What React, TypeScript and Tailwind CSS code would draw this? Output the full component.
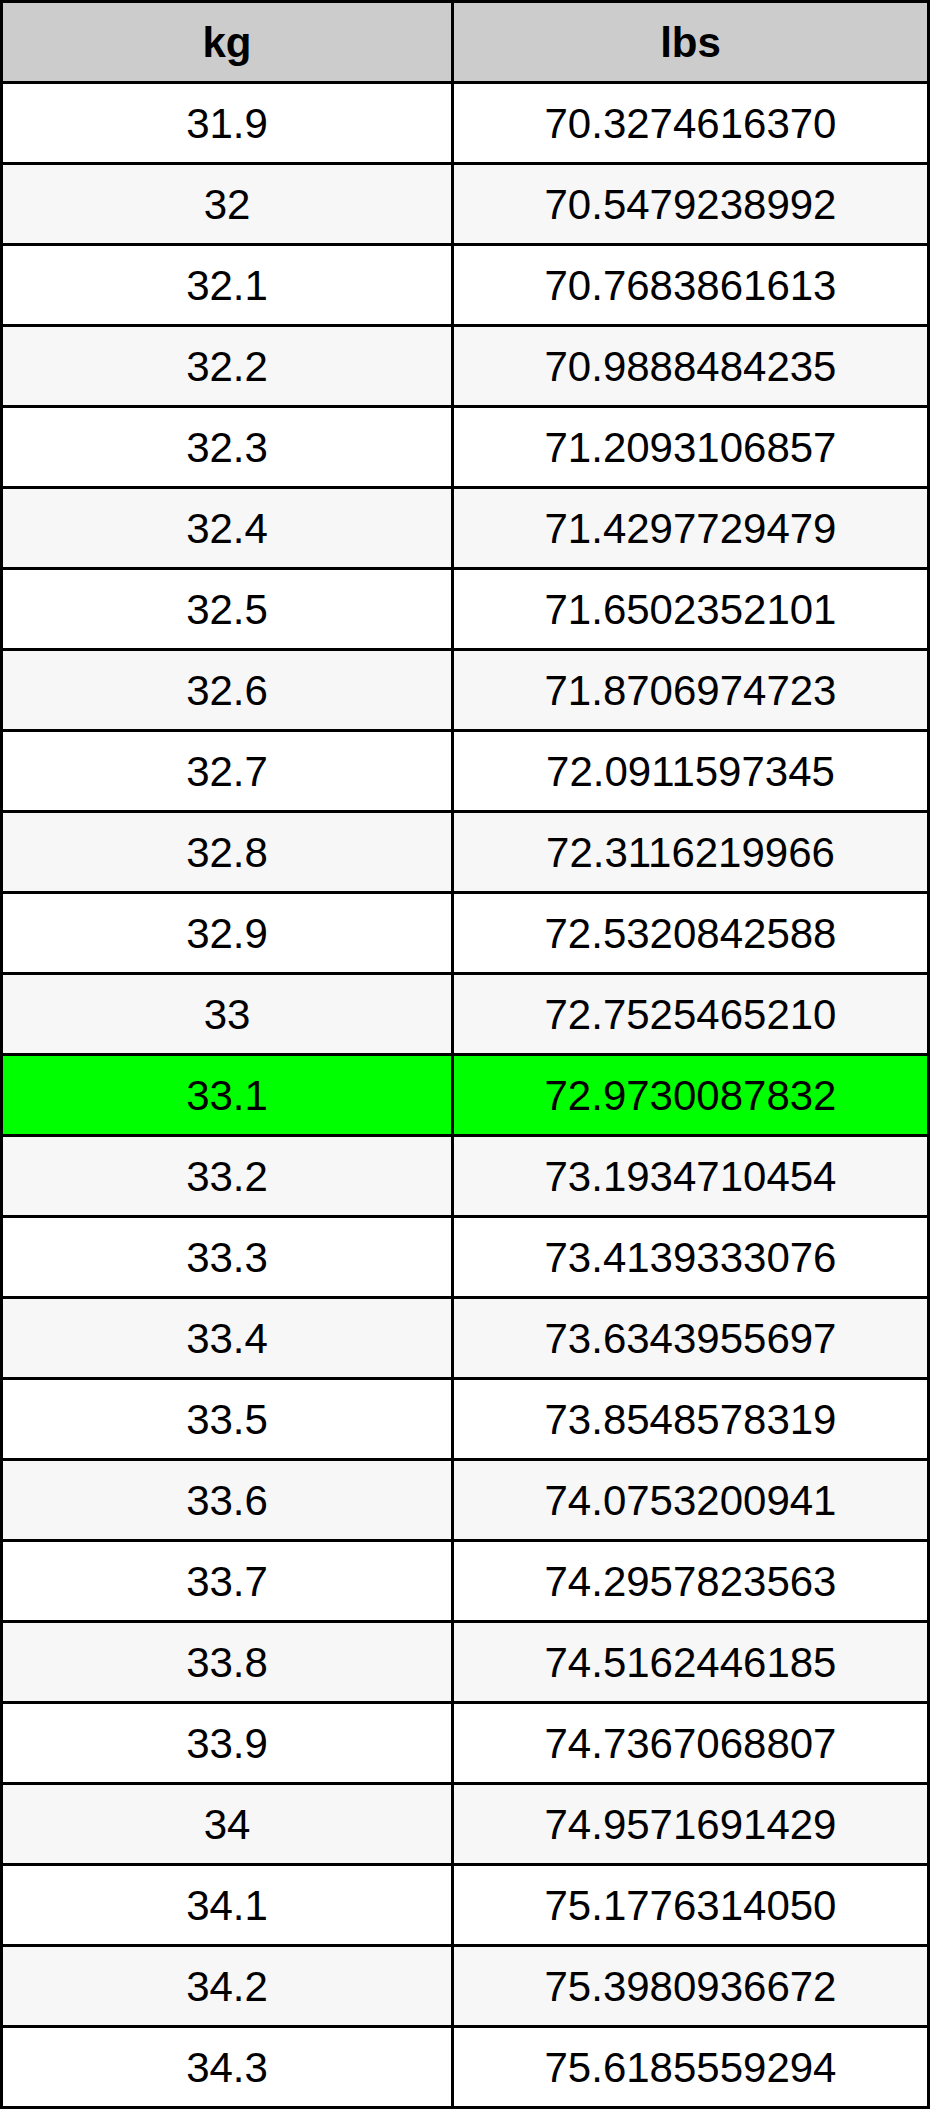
const rows: [string, string][] = [
  ['31.9', '70.3274616370'],
  ['32', '70.5479238992'],
  ['32.1', '70.7683861613'],
  ['32.2', '70.9888484235'],
  ['32.3', '71.2093106857'],
  ['32.4', '71.4297729479'],
  ['32.5', '71.6502352101'],
  ['32.6', '71.8706974723'],
  ['32.7', '72.0911597345'],
  ['32.8', '72.3116219966'],
  ['32.9', '72.5320842588'],
  ['33', '72.7525465210'],
  ['33.1', '72.9730087832'],
  ['33.2', '73.1934710454'],
  ['33.3', '73.4139333076'],
  ['33.4', '73.6343955697'],
  ['33.5', '73.8548578319'],
  ['33.6', '74.0753200941'],
  ['33.7', '74.2957823563'],
  ['33.8', '74.5162446185'],
  ['33.9', '74.7367068807'],
  ['34', '74.9571691429'],
  ['34.1', '75.1776314050'],
  ['34.2', '75.3980936672'],
  ['34.3', '75.6185559294'],
]

export default function App() {
  return (
    <div className="w-[930px] bg-white" style={{ fontFamily: "'Liberation Sans', Arial, sans-serif" }}>
      <table className="w-[930px] table-fixed border-separate border-spacing-0 border-l-[3px] border-t-[3px] border-black text-[42px] text-black">
        <colgroup>
          <col className="w-[451px]" />
          <col className="w-[476px]" />
        </colgroup>
        <thead>
          <tr>
            <th className="h-[81px] p-0 text-center font-bold bg-[#cccccc] border-r-[3px] border-b-[3px] border-black">kg</th>
            <th className="h-[81px] p-0 text-center font-bold bg-[#cccccc] border-r-[3px] border-b-[3px] border-black">lbs</th>
          </tr>
        </thead>
        <tbody>
          {rows.map(([kg, lbs], i) => {
            // highlighted row is the queried value
            const bg = kg === '33.1' ? 'bg-[#00ff00]' : i % 2 === 1 ? 'bg-[#f7f7f7]' : 'bg-white'
            return (
              <tr key={kg} className={bg}>
                <td className="h-[81px] p-0 text-center border-r-[3px] border-b-[3px] border-black">{kg}</td>
                <td className="h-[81px] p-0 text-center border-r-[3px] border-b-[3px] border-black">{lbs}</td>
              </tr>
            )
          })}
        </tbody>
      </table>
    </div>
  )
}
